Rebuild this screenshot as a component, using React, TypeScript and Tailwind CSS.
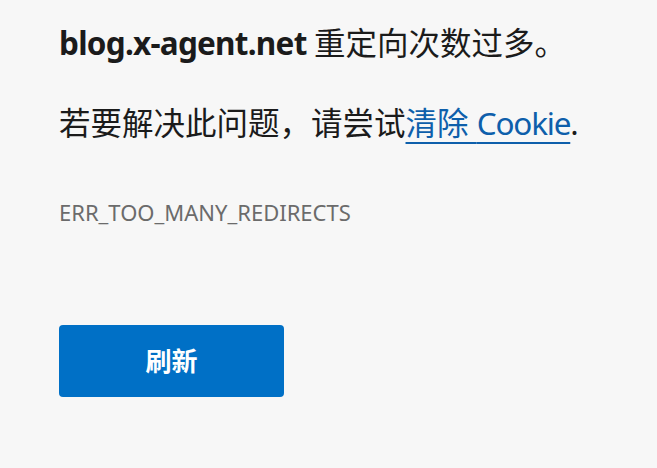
export default function App() {
  return (
    <div
      className="min-h-screen w-full bg-[#f7f7f7] pl-[59px] pt-[24px] text-[#1b1b1b]"
      style={{ fontFamily: '"Noto Sans", "Noto Sans CJK SC", sans-serif' }}
    >
      {/* heading */}
      <h1 className="text-[31.5px] leading-[38px] font-normal whitespace-nowrap">
        <span className="font-bold tracking-[-0.75px]">blog.x-agent.net </span>重定向次数过多。
      </h1>

      <p className="mt-[42px] text-[31.5px] leading-[38px] whitespace-nowrap">
        若要解决此问题，请尝试
        <a
          href="#"
          className="text-[#0e5fab] underline decoration-2 underline-offset-[7px] [text-decoration-skip-ink:none]"
        >
          清除 <span className="tracking-[-1.2px]">Cookie</span>
        </a>
        .
      </p>

      <div className="mt-[56px] text-[22px] leading-[28px] text-[#6b6b6b]">ERR_TOO_MANY_REDIRECTS</div>

      <button
        type="button"
        className="mt-[99px] flex h-[72px] w-[225px] items-center justify-center rounded-[4px] bg-[#0070c6] text-[26px] font-bold text-white"
      >
        刷新
      </button>
    </div>
  )
}
